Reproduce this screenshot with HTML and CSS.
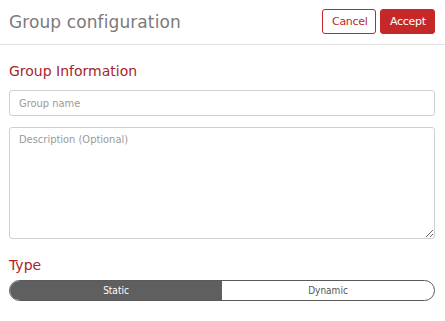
FILE: index.html
```html
<!doctype html>
<html lang="en">
  <head>
    <meta charset="UTF-8" />
    <title>Group configuration</title>
    <link rel="stylesheet" href="styles.css">
  </head>
  <body>
    <div class="dialog">
      <div class="header">
        <h1 class="title">Group configuration</h1>
        <div class="actions">
          <button class="btn btn-cancel">Cancel</button>
          <button class="btn btn-accept">Accept</button>
        </div>
      </div>
      <div class="content">
        <h2 class="section">Group Information</h2>
        <input class="field" type="text" placeholder="Group name" />
        <textarea class="field area" placeholder="Description (Optional)"></textarea>
        <h2 class="section type">Type</h2>
        <div class="toggle">
          <div class="opt active">Static</div>
          <div class="opt">Dynamic</div>
        </div>
      </div>
    </div>
  </body>
</html>
```

FILE: styles.css
```css
* {
  box-sizing: border-box;
  padding: 0;
  margin: 0;
}

body {
  background: #fff;
  font-family: "DejaVu Sans", Verdana, sans-serif;
}

.header {
  display: flex;
  align-items: center;
  justify-content: space-between;
  height: 45px;
  padding: 0 10px 1px 9px;
  border-bottom: 1px solid #e3e3e3;
}

.title {
  font-size: 17px;
  font-weight: normal;
  color: #7a7a7a;
  letter-spacing: 0.1px;
}

.actions {
  display: flex;
  gap: 4px;
}

.btn {
  height: 25px;
  padding: 0 9px;
  border-radius: 3px;
  font-family: "DejaVu Sans", Verdana, sans-serif;
  font-size: 11px;
  letter-spacing: -0.3px;
}

.btn-cancel {
  width: 54px;
  background: #fff;
  border: 1px solid #c0262c;
  color: #c0262c;
}

.btn-accept {
  width: 55px;
  background: #c62828;
  border: 1px solid #c62828;
  color: #fff;
}

.content {
  display: flex;
  flex-direction: column;
  padding: 17px 10px 0 9px;
}

.section {
  font-size: 14px;
  font-weight: normal;
  color: #a8232a;
  margin-bottom: 10px;
  line-height: 18px;
}

.field {
  display: block;
  width: 100%;
  height: 26px;
  padding: 0 9px;
  border: 1px solid #cfcfcf;
  border-radius: 3px;
  font-family: "DejaVu Sans Condensed", "DejaVu Sans", sans-serif;
  font-size: 11px;
  color: #333;
}

.field::placeholder {
  color: #9a9a9a;
}

.area {
  height: 112px;
  margin-top: 11px;
  padding: 5px 9px;
  resize: vertical;
}

.type {
  margin-top: 17px;
  margin-bottom: 6px;
}

.toggle {
  display: flex;
  height: 21px;
  border: 1px solid #5a5a5a;
  border-radius: 11px;
  overflow: hidden;
}

.opt {
  flex: 1;
  display: flex;
  align-items: center;
  justify-content: center;
  font-family: "DejaVu Sans Condensed", "DejaVu Sans", sans-serif;
  font-size: 10px;
  color: #555;
}

.opt.active {
  background: #5f5f5f;
  color: #fff;
}
```
